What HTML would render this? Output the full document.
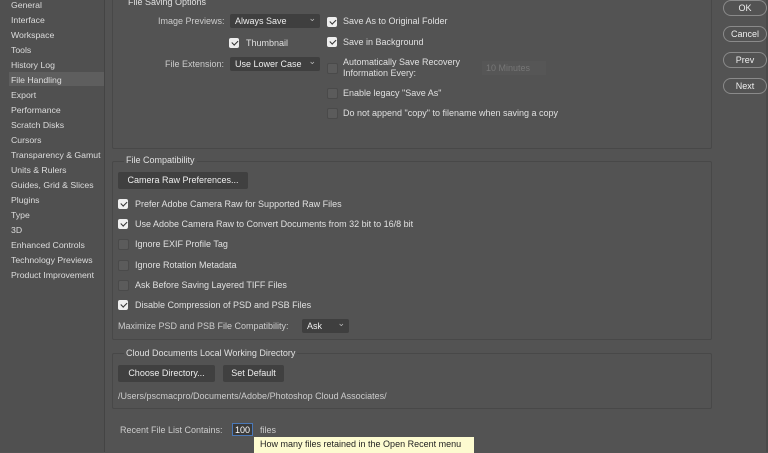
<!DOCTYPE html><html><head><style>
body{margin:0;width:768px;height:452px;background:#535353;font-family:"Liberation Sans",sans-serif;font-size:9px;color:#e0e0e0;position:relative;overflow:hidden}
.a{position:absolute;white-space:nowrap}
.side{position:absolute;left:0;top:0;width:104px;height:452px;background:#505050;border-right:1px solid #444}
.side div{position:absolute;left:11px;font-size:8.7px;color:#ddd}
.sel{position:absolute;left:9px;top:72px;width:95px;height:14px;background:#5e5e5e}
.box{position:absolute;border:1px solid #484848;border-radius:2px}
.cb{position:absolute;width:10px;height:10px;border-radius:2px;background:#eee}
.cb.on::after{content:"";position:absolute;left:3.5px;top:1px;width:2.5px;height:5px;border:solid #333;border-width:0 1.5px 1.5px 0;transform:rotate(45deg)}
.cb.off{background:#5b5b5b;border:1px solid #4a4a4a;width:9px;height:9px}
.sel2{position:absolute;background:#3f3f3f;border-radius:2px;height:14px;color:#eee;font-size:9px;line-height:14px;padding-left:5px;box-sizing:border-box}
.sel2::after{content:"⌄";position:absolute;right:4px;top:-3px;font-size:9px;color:#bbb}
.btn{position:absolute;background:#404040;border-radius:2px;height:17px;line-height:17px;text-align:center;color:#eee}
.rb{position:absolute;left:723px;width:42px;height:14px;border:1px solid #8a8a8a;border-radius:8px;text-align:center;line-height:14px;color:#eee}
</style></head><body>
<div class="side"></div><div class="sel"></div>
<div class="side" style="background:none;border:none">
<div style="top:0">General</div><div style="top:15px">Interface</div><div style="top:30px">Workspace</div><div style="top:45px">Tools</div><div style="top:60px">History Log</div><div style="top:75px">File Handling</div><div style="top:90px">Export</div><div style="top:105px">Performance</div><div style="top:120px">Scratch Disks</div><div style="top:135px">Cursors</div><div style="top:150px">Transparency &amp; Gamut</div><div style="top:165px">Units &amp; Rulers</div><div style="top:180px">Guides, Grid &amp; Slices</div><div style="top:195px">Plugins</div><div style="top:210px">Type</div><div style="top:225px">3D</div><div style="top:240px">Enhanced Controls</div><div style="top:255px">Technology Previews</div><div style="top:270px">Product Improvement</div>
</div>
<div style="position:absolute;left:766px;top:0;width:2px;height:452px;background:#4a4a4a"></div>
<div class="rb" style="top:0">OK</div><div class="rb" style="top:26px">Cancel</div><div class="rb" style="top:52px">Prev</div><div class="rb" style="top:78px">Next</div>

<div class="box" style="left:112px;top:-2px;width:598px;height:149px"></div>
<div class="a" style="left:126px;top:-3px;background:#535353;padding:0 2px">File Saving Options</div>
<div class="a" style="left:158px;top:16px;color:#ccc">Image Previews:</div>
<div class="sel2" style="left:230px;top:14px;width:90px">Always Save</div>
<div class="cb on" style="left:229px;top:38px"></div><div class="a" style="left:246px;top:38px">Thumbnail</div>
<div class="a" style="left:165px;top:59px;color:#ccc">File Extension:</div>
<div class="sel2" style="left:230px;top:57px;width:90px">Use Lower Case</div>
<div class="cb on" style="left:327px;top:17px"></div><div class="a" style="left:343px;top:16px">Save As to Original Folder</div>
<div class="cb on" style="left:327px;top:37px"></div><div class="a" style="left:343px;top:37px">Save in Background</div>
<div class="cb off" style="left:327px;top:63px"></div><div class="a" style="left:343px;top:57px;line-height:11px">Automatically Save Recovery<br>Information Every:</div>
<div class="a" style="left:482px;top:61px;width:64px;height:14px;background:#565656;color:#777;line-height:14px;padding-left:4px;box-sizing:border-box">10 Minutes</div>
<div class="cb off" style="left:327px;top:88px"></div><div class="a" style="left:343px;top:88px">Enable legacy "Save As"</div>
<div class="cb off" style="left:327px;top:108px"></div><div class="a" style="left:343px;top:108px">Do not append "copy" to filename when saving a copy</div>

<div class="box" style="left:112px;top:161px;width:598px;height:177px"></div>
<div class="a" style="left:124px;top:155px;background:#535353;padding:0 2px">File Compatibility</div>
<div class="btn" style="left:118px;top:172px;width:130px">Camera Raw Preferences...</div>
<div class="cb on" style="left:118px;top:199px"></div><div class="a" style="left:135px;top:199px">Prefer Adobe Camera Raw for Supported Raw Files</div>
<div class="cb on" style="left:118px;top:219px"></div><div class="a" style="left:135px;top:219px">Use Adobe Camera Raw to Convert Documents from 32 bit to 16/8 bit</div>
<div class="cb off" style="left:118px;top:239px"></div><div class="a" style="left:135px;top:239px">Ignore EXIF Profile Tag</div>
<div class="cb off" style="left:118px;top:260px"></div><div class="a" style="left:135px;top:260px">Ignore Rotation Metadata</div>
<div class="cb off" style="left:118px;top:280px"></div><div class="a" style="left:135px;top:280px">Ask Before Saving Layered TIFF Files</div>
<div class="cb on" style="left:118px;top:300px"></div><div class="a" style="left:135px;top:300px">Disable Compression of PSD and PSB Files</div>
<div class="a" style="left:118px;top:321px;color:#ccc">Maximize PSD and PSB File Compatibility:</div>
<div class="sel2" style="left:302px;top:319px;width:47px">Ask</div>

<div class="box" style="left:112px;top:353px;width:598px;height:54px"></div>
<div class="a" style="left:124px;top:348px;background:#535353;padding:0 2px">Cloud Documents Local Working Directory</div>
<div class="btn" style="left:118px;top:365px;width:97px">Choose Directory...</div>
<div class="btn" style="left:223px;top:365px;width:61px">Set Default</div>
<div class="a" style="left:118px;top:391px;color:#ccc">/Users/pscmacpro/Documents/Adobe/Photoshop Cloud Associates/</div>

<div class="a" style="left:120px;top:425px;color:#ccc">Recent File List Contains:</div>
<div class="a" style="left:232px;top:423px;width:21px;height:13px;background:#3a3a3a;border:1px solid #4a78b8;line-height:13px;box-sizing:border-box;padding-left:2px;color:#fff">100</div>
<div class="a" style="left:260px;top:425px;color:#ccc">files</div>
<div class="a" style="left:254px;top:437px;width:220px;height:16px;background:#fdfbd0;color:#222;line-height:15px;padding-left:6px;box-sizing:border-box">How many files retained in the Open Recent menu</div>
</body></html>
